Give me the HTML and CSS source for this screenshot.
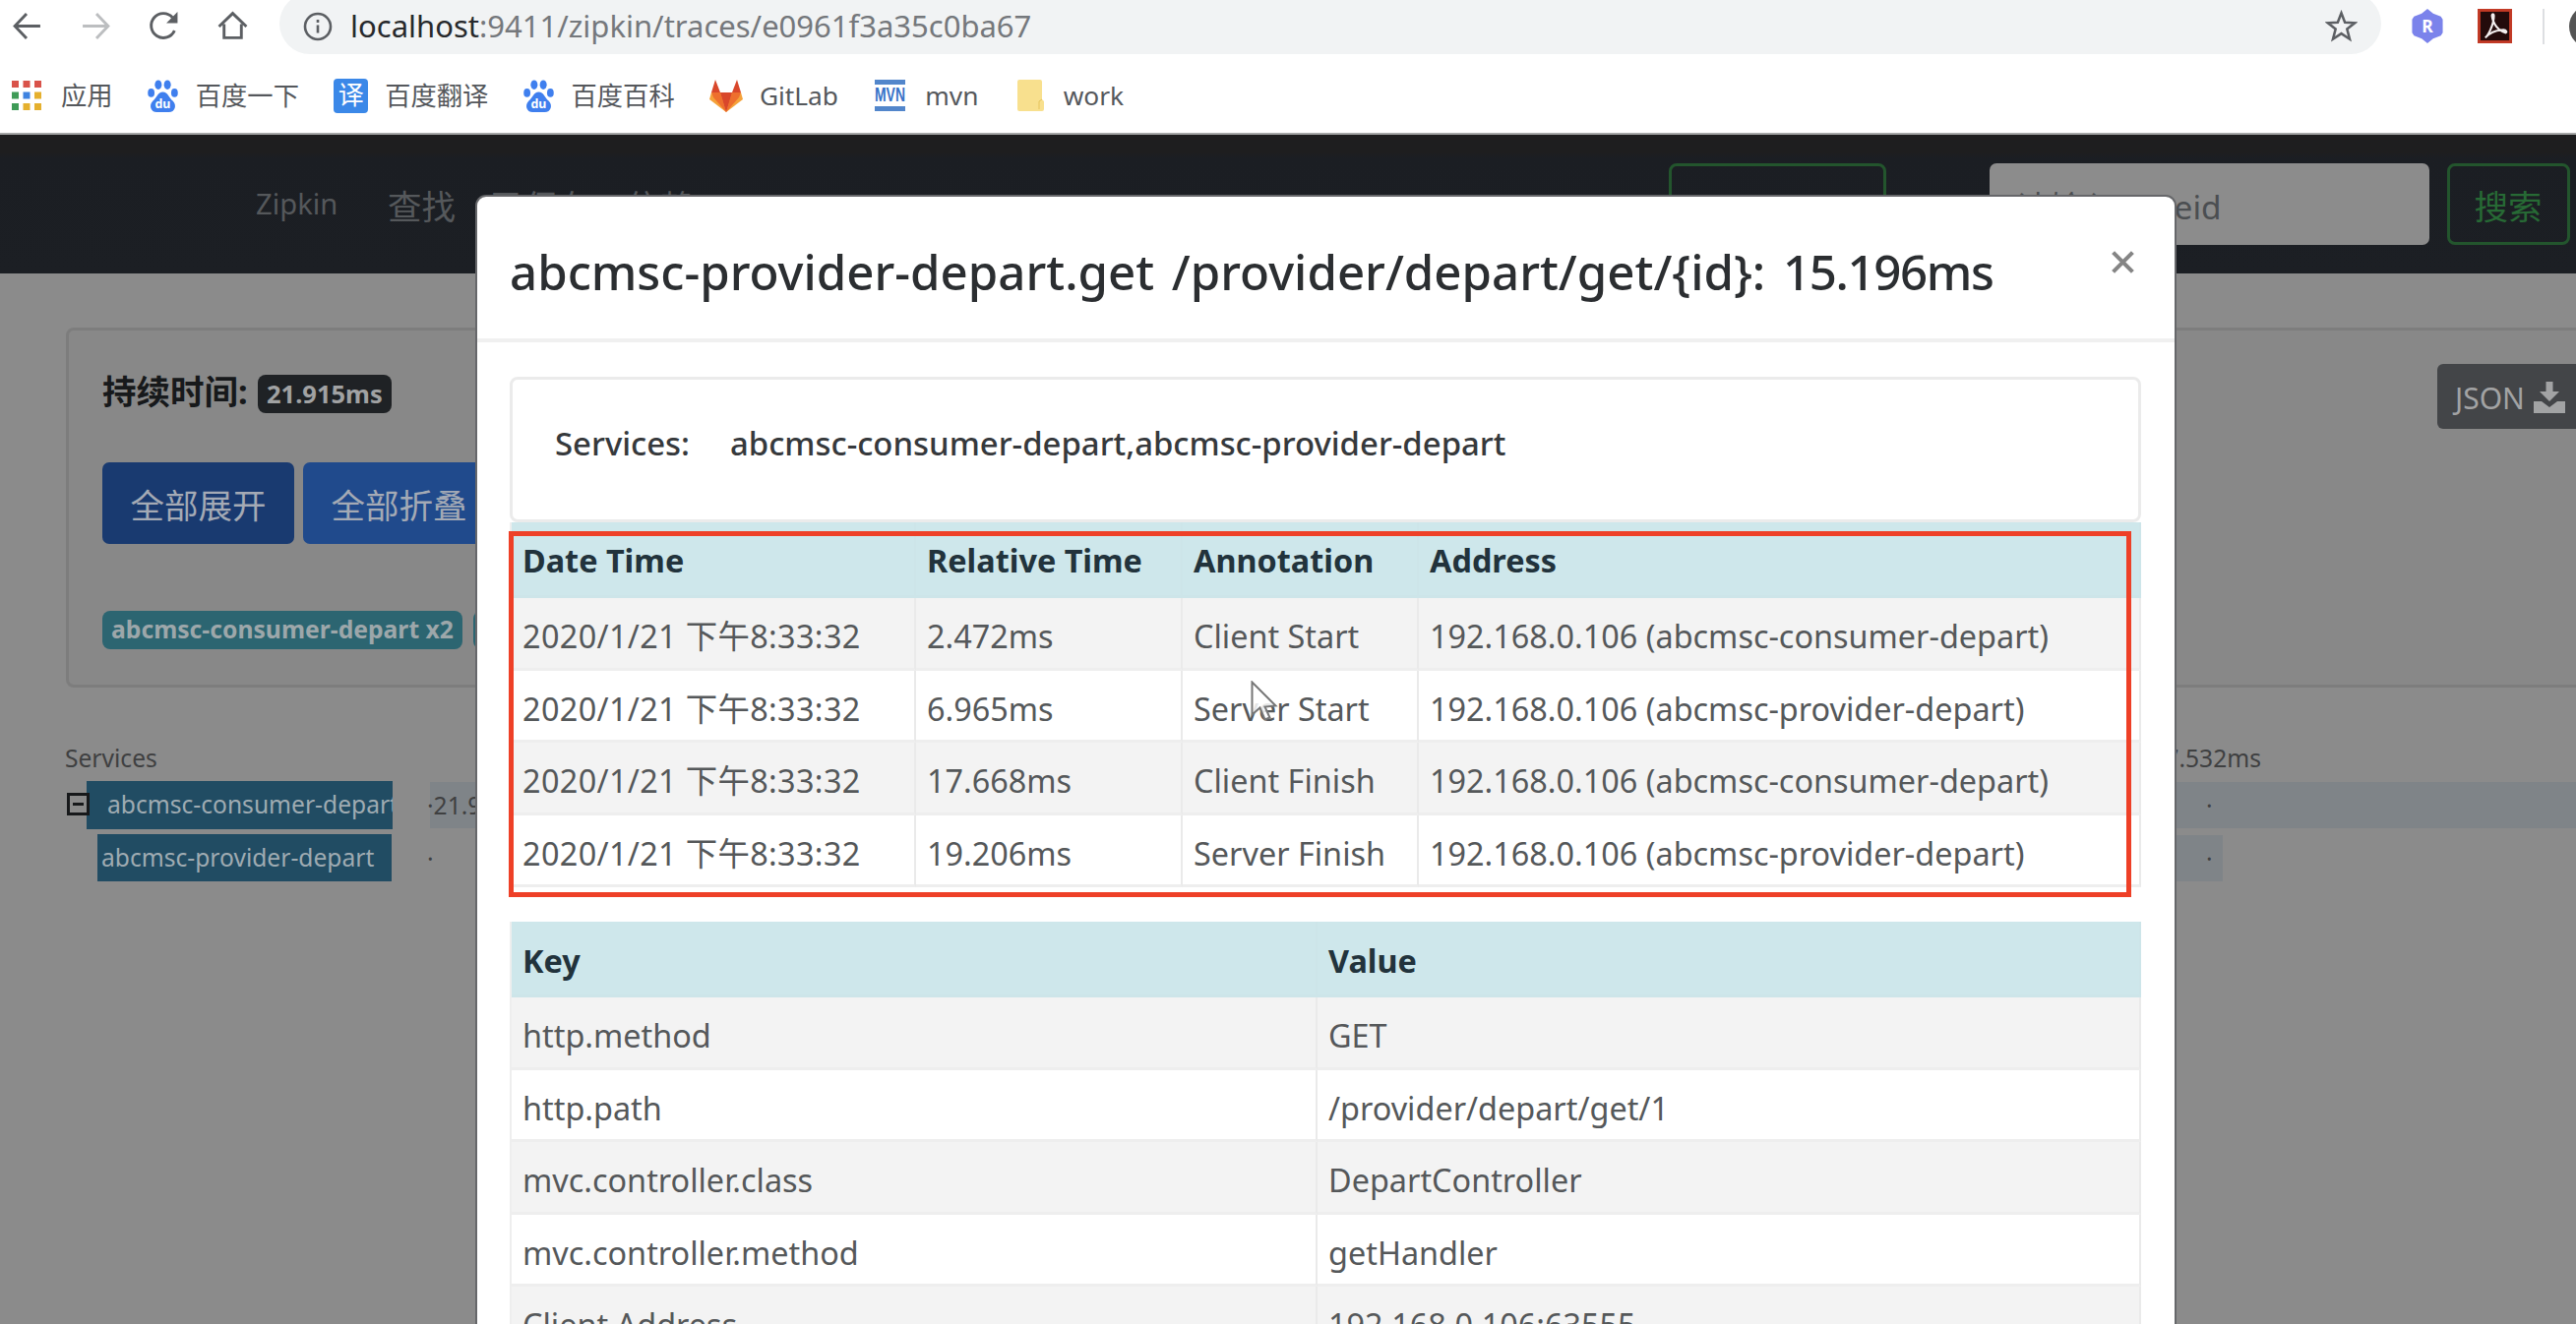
FILE: index.html
```html
<!DOCTYPE html>
<html lang="zh-CN">
<head>
    <meta charset="UTF-8">
    <meta name="viewport" content="width=device-width, initial-scale=1.0">
    <title>Zipkin</title>
    <link rel="stylesheet" href="styles.css">
</head>
<body>
    <!-- Browser toolbar -->
    <div class="toolbar">
        <svg class="nav-icon" viewBox="0 0 30 30"><path d="M28 15H4M14.500 3L3 15l11.500 12" /></svg>
        <svg class="nav-icon disabled" viewBox="0 0 30 30"><path d="M2 15h24M15.500 3L27 15 15.500 27" /></svg>
        <svg class="nav-icon" viewBox="0 0 30 30"><path d="M25.500 19.500A12 12 0 1 1 23.500 6.500" /><path class="solid" d="M28.500 1v11h-11z" /></svg>
        <svg class="nav-icon" viewBox="0 0 30 30"><path d="M1.500 15.500L15 2.500l13.500 13M6.500 13v13.500h17V13" /></svg>
        <div class="omnibox">
            <svg class="info" viewBox="0 0 30 30"><circle cx="15" cy="15" r="13" /><path d="M15 13.500v8M15 8v3" /></svg>
            <span class="url"><b>localhost</b>:9411/zipkin/traces/e0961f3a35c0ba67</span>
            <svg class="star" viewBox="0 0 30 30"><path d="M15 3l3.300 8.600 9.200.5-7.200 5.700 2.400 9.200L15 21.900 7.300 27l2.400-9.200-7.200-5.700 9.200-.5z" /></svg>
        </div>
        <svg class="ext ext-r" viewBox="0 0 32 36"><path d="M16 0l6 5 8 3 2 3v14l-2 3-8 3-6 5-6-5-8-3-2-3V11l2-3 8-3z" fill="#7b83eb" /><text x="16" y="25" text-anchor="middle">R</text></svg>
        <svg class="ext ext-pdf" viewBox="0 0 36 36"><rect x="1.500" y="1.500" width="33" height="33" fill="#230b0b" stroke="#c23a26" stroke-width="3" /><path d="M8 30c2-1 9-12 9-23 0-2-2-2-2 0 1 9 7 16 14 18 2 0 1-3-2-3-6 0-13 2-19 8z" fill="none" stroke="#f3eeee" stroke-width="2.200" /></svg>
        <span class="divider"></span>
        <span class="avatar"></span>
    </div>

    <!-- Bookmarks -->
    <div class="bookmarks">
        <span class="mark">
            <svg class="apps" viewBox="0 0 30 30"><path fill="#d9534a" d="M0 0h7v7H0zM11.500 0h7v7h-7zM23 0h7v7h-7z" /><path fill="#3f9b57" d="M0 11.500h7v7H0zM0 23h7v7H0z" /><path fill="#3f83e0" d="M11.500 11.500h7v7h-7z" /><path fill="#e5b02e" d="M23 11.500h7v7h-7zM11.500 23h7v7h-7zM23 23h7v7h-7z" /></svg>应用
        </span>
        <span class="mark">
            <svg class="paw" viewBox="0 0 30 32"><g fill="#3f7fee"><ellipse cx="3.500" cy="13" rx="3.300" ry="4.200" /><ellipse cx="10.500" cy="5" rx="3.400" ry="4.600" /><ellipse cx="19.500" cy="5" rx="3.400" ry="4.600" /><ellipse cx="26.500" cy="13" rx="3.300" ry="4.200" /><path d="M15 12c5 0 6 6 10 9 4 4 2 11-4 11H9c-6 0-8-7-4-11 4-3 5-9 10-9z" /></g><text x="15" y="28" text-anchor="middle">du</text></svg>百度一下
        </span>
        <span class="mark"><span class="translate">译</span>百度翻译</span>
        <span class="mark">
            <svg class="paw" viewBox="0 0 30 32"><g fill="#3f7fee"><ellipse cx="3.500" cy="13" rx="3.300" ry="4.200" /><ellipse cx="10.500" cy="5" rx="3.400" ry="4.600" /><ellipse cx="19.500" cy="5" rx="3.400" ry="4.600" /><ellipse cx="26.500" cy="13" rx="3.300" ry="4.200" /><path d="M15 12c5 0 6 6 10 9 4 4 2 11-4 11H9c-6 0-8-7-4-11 4-3 5-9 10-9z" /></g><text x="15" y="28" text-anchor="middle">du</text></svg>百度百科
        </span>
        <span class="mark">
            <svg class="gitlab" viewBox="0 0 34 33"><path fill="#f5a23a" d="M2 13L0 20l17 13 17-13-2-7z" /><path fill="#ee6f2e" d="M2 13h9l6 20L4 18zM32 13h-9l-6 20 13-15z" /><path fill="#d9472b" d="M6 0L2 13h9zM28 0l4 13h-9zM11 13h12l-6 20z" /></svg>GitLab
        </span>
        <span class="mark">
            <svg class="mvn" viewBox="0 0 31 32"><path fill="#5286cb" d="M0 0h31v5H0zM0 27h31v5H0z" /><text x="0" y="22" textLength="31" lengthAdjust="spacingAndGlyphs">MVN</text></svg>mvn
        </span>
        <span class="mark">
            <svg class="folder" viewBox="0 0 27 32"><path fill="#f8e08e" d="M0 2q0-2 2-2h21q2 0 2 2v18l2 2v8q0 2-2 2H2q-2 0-2-2z" /><path fill="none" stroke="#e6c45c" d="M25 20l-3 2v8" /></svg>work
        </span>
    </div>

    <!-- Zipkin navbar -->
    <div class="navbar">
        <span class="brand">Zipkin</span>
        <span class="nav-link">查找</span>
        <span class="nav-link">已保存</span>
        <span class="nav-link">依赖</span>
        <span class="btn-outline lens">Try Lens</span>
        <span class="trace-input">请输入traceid</span>
        <span class="btn-outline search">搜索</span>
    </div>

    <!-- Trace page -->
    <div class="trace-card">
        <div class="summary">
            <strong>持续时间:</strong>
            <span class="badge dark">21.915ms</span>
            <span class="json-button">JSON
                <svg viewBox="0 0 32 32"><path d="M12.500 0h7v10h6.500L16 20 6 10h6.500z" /><path d="M0 20h8l8 6 8-6h8v12H0z" /></svg>
            </span>
        </div>
        <div class="buttons">
            <span class="button active">全部展开</span>
            <span class="button">全部折叠</span>
        </div>
        <div class="badges">
            <span class="badge">abcmsc-consumer-depart x2</span>
            <span class="badge">abcmsc-provider-depart x1</span>
        </div>
    </div>

    <div class="timeline">
        <div class="ticks">
            <span class="first">Services</span>
            <span>4.383ms</span>
            <span>8.766ms</span>
            <span>13.149ms</span>
            <span>17.532ms</span>
        </div>
        <div class="span-row">
            <span class="expander"></span>
            <span class="service">abcmsc-consumer-depart</span>
            <div class="lane">
                <div class="duration" style="width: 100%"></div>
                <span>·21.915ms</span><span>·</span><span>·</span><span>·</span><span>·</span>
            </div>
        </div>
        <div class="span-row">
            <span class="service child">abcmsc-provider-depart</span>
            <div class="lane">
                <div class="duration" style="left: 11.28%; width: 69.3%"></div>
                <span>·</span><span>·</span><span>·</span><span>·</span><span>·</span>
            </div>
        </div>
    </div>

    <!-- Span detail dialog -->
    <div class="modal">
        <div class="modal-header">
            <h4>abcmsc-provider-depart.get /provider/depart/get/{id}: <span class="time">15.196ms</span></h4>
            <svg class="close" viewBox="0 0 24 24"><path d="M2.500 2.500l19 19M21.500 2.500l-19 19" /></svg>
        </div>
        <div class="modal-body">
            <div class="services"><span>Services:</span><span>abcmsc-consumer-depart,abcmsc-provider-depart</span></div>
            <table class="annotations">
                <tr><th class="col-date">Date Time</th><th class="col-relative">Relative Time</th><th class="col-annotation">Annotation</th><th>Address</th></tr>
                <tr><td>2020/1/21 下午8:33:32</td><td>2.472ms</td><td>Client Start</td><td>192.168.0.106 (abcmsc-consumer-depart)</td></tr>
                <tr><td>2020/1/21 下午8:33:32</td><td>6.965ms</td><td>Server Start</td><td>192.168.0.106 (abcmsc-provider-depart)</td></tr>
                <tr><td>2020/1/21 下午8:33:32</td><td>17.668ms</td><td>Client Finish</td><td>192.168.0.106 (abcmsc-consumer-depart)</td></tr>
                <tr><td>2020/1/21 下午8:33:32</td><td>19.206ms</td><td>Server Finish</td><td>192.168.0.106 (abcmsc-provider-depart)</td></tr>
            </table>
            <table class="tags">
                <tr><th class="col-key">Key</th><th>Value</th></tr>
                <tr><td>http.method</td><td>GET</td></tr>
                <tr><td>http.path</td><td>/provider/depart/get/1</td></tr>
                <tr><td>mvc.controller.class</td><td>DepartController</td></tr>
                <tr><td>mvc.controller.method</td><td>getHandler</td></tr>
                <tr><td>Client Address</td><td>192.168.0.106:63555</td></tr>
            </table>
        </div>
        <div class="highlight"></div>
        <svg class="cursor" viewBox="0 0 30 42"><path d="M1.500 1.500v33l8-7 5 12 5-2-5-11 11-1z" /></svg>
    </div>
</body>
</html>
```
FILE: styles.css
```css
* {
    box-sizing: border-box;
}

body {
    margin: 0;
    height: 1346px;
    overflow: hidden;
    position: relative;
    background-color: #8b8b8b;
    font-family: "Noto Sans", "Noto Sans CJK SC", sans-serif;
    white-space: nowrap;
}

/* Browser toolbar */
.toolbar {
    display: flex;
    align-items: center;
    height: 57px;
    padding: 0 0 4px 12px;
    background-color: #fff;
}

.nav-icon {
    width: 31px;
    height: 31px;
    margin-right: 38.5px;
    flex: none;
    fill: none;
    stroke: #5c5f63;
    stroke-width: 2.8;
}

.nav-icon.disabled {
    stroke: #bcbec0;
}

.nav-icon .solid {
    fill: #5c5f63;
    stroke: none;
}

.omnibox {
    display: flex;
    align-items: center;
    width: 2136px;
    height: 62px;
    margin: -5px 31px 0 -6px;
    padding: 5px 24px 0;
    border-radius: 31px;
    background-color: #f1f3f4;
    flex: none;
}

.info,
.star {
    width: 30px;
    height: 30px;
    fill: none;
    stroke: #5c5f63;
    stroke-width: 2.6;
}

.star {
    width: 33px;
    height: 33px;
    margin-left: auto;
    stroke-width: 2.3;
}

.url {
    margin: -2px 0 0 18px;
    font-size: 31px;
    line-height: 50px;
    color: #75787c;
}

.url b {
    font-weight: 400;
    color: #27292c;
}

.ext {
    flex: none;
    height: 35px;
}

.ext-r {
    width: 32px;
    margin-right: 35px;
}

.ext-r text {
    font-size: 18px;
    font-weight: 700;
    fill: #fff;
}

.ext-pdf {
    width: 35px;
    margin-right: 31px;
}

.divider {
    width: 2px;
    height: 36px;
    margin-right: 25px;
    background-color: #dddfe2;
    flex: none;
}

.avatar {
    width: 44px;
    height: 44px;
    border-radius: 50%;
    background-color: #555;
    flex: none;
}

/* Bookmarks */
.bookmarks {
    display: flex;
    align-items: center;
    height: 80px;
    padding: 2px 0 0 12px;
    border-bottom: 2px solid #a5a6a6;
    background-color: #fff;
    font-size: 26.3px;
    color: #55585c;
}

.mark {
    display: flex;
    align-items: center;
    height: 40px;
    margin-right: 35.2px;
    line-height: 40px;
}

.mark svg {
    flex: none;
}

.apps {
    width: 30px;
    height: 30px;
    margin-right: 20px;
}

.paw {
    width: 31px;
    height: 33px;
    margin-right: 18px;
}

.paw text {
    font-size: 12px;
    font-weight: 700;
    fill: #fff;
}

.translate {
    width: 35px;
    height: 35px;
    margin-right: 17px;
    border-radius: 4px;
    background-color: #3b88e8;
    color: #fff;
    font-size: 26px;
    line-height: 33px;
    text-align: center;
}

.gitlab {
    width: 34px;
    height: 33px;
    margin-right: 17px;
}

.mvn {
    width: 31px;
    height: 32px;
    margin: 0 20px 0 2px;
}

.mvn text {
    fill: #3773c8;
    font: 700 20px "Liberation Sans", sans-serif;
}

.folder {
    width: 27px;
    height: 32px;
    margin: 0 20px 0 4px;
}

/* Navbar */
.navbar {
    display: flex;
    height: 141px;
    padding: 29px 0 0 260px;
    background: linear-gradient(#1e1e1f 0, #1e1e1f 18px, #1b1e23 24px, #1c1f24 100%);
    color: #55585b;
    font-size: 34.5px;
    line-height: 87px;
}

.brand {
    width: 134px;
    font-size: 29.2px;
    line-height: 82px;
}

.nav-link {
    margin-right: 35px;
}

.btn-outline {
    height: 83px;
    border: 3px solid #23552d;
    border-radius: 8px;
    color: #276a35;
    text-align: center;
}

.lens {
    width: 221px;
    margin-left: 955px;
    line-height: 84px;
}

.trace-input {
    width: 447px;
    height: 83px;
    margin: 0 18px 0 105px;
    padding-left: 28px;
    border-radius: 7px;
    background-color: #8c8c8c;
    color: #4b4e51;
    font-size: 33.4px;
    line-height: 88px;
}

.search {
    width: 125px;
    line-height: 82px;
}

/* Trace summary */
.trace-card {
    width: 2600px;
    height: 366px;
    margin: 55px 0 0 67px;
    padding: 34px;
    border: 3px solid #7d7d7d;
    border-radius: 8px;
    background-color: #888;
}

.summary {
    display: flex;
    align-items: flex-start;
    height: 100px;
    color: #17191b;
    font-size: 34.5px;
}

.summary strong {
    width: 158px;
    line-height: 56px;
    flex: none;
}

.badge {
    display: inline-block;
    height: 39px;
    margin-right: 7px;
    padding: 0 9px;
    border-radius: 8px;
    background-color: #2c6571;
    color: #9da7aa;
    font-size: 24.7px;
    font-weight: 700;
    line-height: 38px;
}

.badge.dark {
    margin: 11px 0 0;
    background-color: #1f2225;
    color: #a1a2a3;
    font-size: 25.5px;
    flex: none;
}

.json-button {
    display: flex;
    align-items: center;
    gap: 9px;
    width: 180px;
    height: 66px;
    margin: 0 -27px 0 auto;
    padding: 3px 0 0 18px;
    border-radius: 6px;
    background-color: #434548;
    color: #a2a3a4;
    font-size: 30px;
    flex: none;
}

.json-button svg {
    width: 32px;
    height: 32px;
    margin-top: -2px;
    fill: #a2a3a4;
}

.buttons {
    display: flex;
    gap: 9px;
}

.button {
    width: 195px;
    height: 83px;
    border-radius: 7px;
    background-color: #204a8c;
    color: #a4aab5;
    font-size: 34.5px;
    line-height: 87px;
    text-align: center;
}

.button.active {
    background-color: #193a70;
}

.badges {
    padding-top: 68px;
}

/* Span timeline */
.timeline {
    padding-top: 49px;
    color: #3f4041;
    font-size: 24.6px;
}

.ticks {
    display: flex;
    height: 46px;
    line-height: 46px;
}

.ticks span {
    width: 482px;
    flex: none;
    text-align: right;
}

.ticks .first {
    width: 370px;
    padding-left: 66px;
    text-align: left;
}

.span-row {
    display: flex;
    position: relative;
    height: 49px;
    margin-bottom: 5px;
}

.expander {
    position: absolute;
    left: 68px;
    top: 12px;
    width: 23px;
    height: 23px;
    border: 3px solid #17191b;
}

.expander::after {
    content: "";
    display: block;
    width: 11px;
    height: 3px;
    margin: 7px 3px;
    background-color: #17191b;
}

.service {
    width: 311px;
    height: 49px;
    margin: 0 38px 0 88px;
    padding-left: 21px;
    background-color: #214c63;
    color: #9fabb2;
    line-height: 48px;
    overflow: hidden;
    flex: none;
}

.service.child {
    width: 299px;
    height: 48px;
    margin-left: 99px;
    margin-right: 39px;
    padding-left: 4px;
}

.lane {
    position: relative;
    display: flex;
    width: 2261px;
    flex: none;
    line-height: 49px;
}

.lane span {
    position: relative;
    width: 452px;
    left: -3px;
    flex: none;
}

.duration {
    position: absolute;
    top: 1px;
    height: 47px;
    background-color: #7f8488;
}

/* Dialog */
.modal {
    position: absolute;
    left: 485px;
    top: 200px;
    width: 1725px;
    height: 1160px;
    border-radius: 9px;
    background-color: #fff;
    box-shadow: 0 0 0 2px #66676a;
}

.modal-header {
    display: flex;
    justify-content: space-between;
    height: 148px;
    padding: 0 40px 0 33px;
    border-bottom: 4px solid #f0f0f0;
}

h4 {
    margin: 0;
    color: #2b2e31;
    font-size: 49.2px;
    font-weight: 500;
    line-height: 151px;
    word-spacing: 5px;
}

h4 .time {
    letter-spacing: -1.4px;
}

.close {
    width: 25px;
    height: 25px;
    margin-top: 54px;
    fill: none;
    stroke: #858585;
    stroke-width: 4;
}

.modal-body {
    padding: 35px 34px 0 33px;
}

.services {
    display: flex;
    height: 148px;
    padding-left: 43px;
    border: 3px solid #ebebeb;
    border-radius: 8px;
    color: #36393c;
    font-size: 32.9px;
    font-weight: 500;
    line-height: 130px;
}

.services span:first-child {
    width: 178px;
}

table {
    width: 1658px;
    table-layout: fixed;
    border-collapse: separate;
    border-spacing: 0;
    border-left: 2px solid #eee;
    color: #55585a;
    font-size: 32.4px;
}

th,
td {
    height: 73.5px;
    padding: 6px 0 0 11px;
    border-right: 2px solid #eaeaea;
    border-bottom: 3px solid #eeeeee;
    line-height: 60px;
    text-align: left;
}

th {
    height: 77px;
    padding-top: 2px;
    border-color: #cde5e9;
    background-color: #cee7eb;
    color: #22333c;
}

tr:nth-child(even) td {
    background-color: #f3f3f3;
}

.annotations td:first-child {
    letter-spacing: 0.35px;
}

.col-date {
    width: 411px;
}

.col-relative {
    width: 271px;
}

.col-annotation {
    width: 240px;
}

.tags {
    margin-top: 35px;
}

.tags th {
    padding-top: 3px;
}

.col-key {
    width: 819px;
}

/* Marked area */
.highlight {
    position: absolute;
    left: 32px;
    top: 340px;
    width: 1649px;
    height: 372px;
    border: 5px solid #ee4027;
}

.cursor {
    position: absolute;
    left: 786px;
    top: 492px;
    width: 30px;
    height: 42px;
    fill: rgba(255, 255, 255, 0.85);
    stroke: #777;
    stroke-width: 2;
}
```
